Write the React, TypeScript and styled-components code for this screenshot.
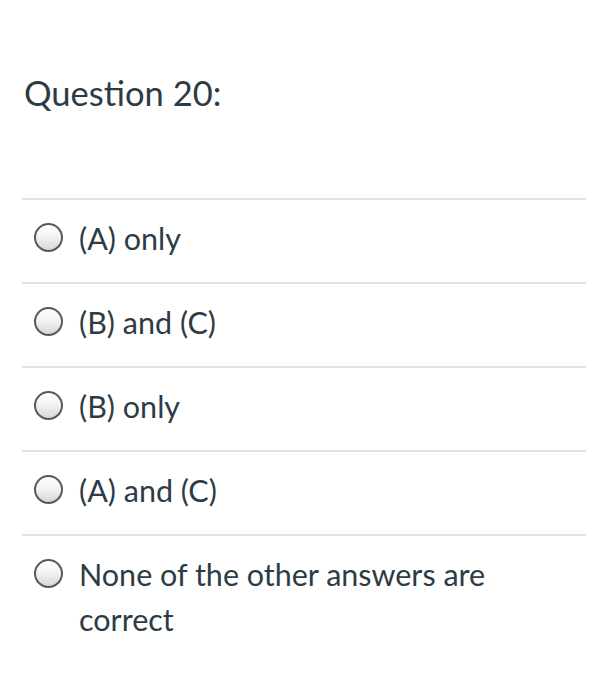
import React from "react";
import styled, { createGlobalStyle } from "styled-components";

const Global = createGlobalStyle`
  html, body { margin: 0; padding: 0; background: #ffffff; }
  body { font-family: Lato, "Open Sans", sans-serif; color: #2d3b45; }
`;

const Page = styled.div`
  padding: 69px 17px 0 22px;
`;

const Title = styled.h1`
  margin: 0 0 0 2px;
  font-size: 34.5px;
  font-weight: 400;
  line-height: 48px;
  color: #2d3b45;
`;

const List = styled.div`
  margin-top: 81px;
  border-top: 2px solid #e2e2e2;
`;

const Row = styled.label`
  display: flex;
  align-items: flex-start;
  gap: 16px;
  padding: 16px 0 21px 12px;
  border-bottom: 2px solid #e2e2e2;
  &:last-child { border-bottom: none; }
`;

const Radio = styled.span`
  flex: none;
  width: 29px;
  height: 29px;
  margin-top: 7px;
  box-sizing: border-box;
  border-radius: 50%;
  border: 2.5px solid #555a5e;
  background: linear-gradient(180deg, #ffffff 0%, #f3f3f3 45%, #d6d6d6 100%);
`;

const Text = styled.span`
  font-size: 30.5px;
  line-height: 45px;
  color: #2d3b45;
  max-width: 440px;
`;

const answers = ["(A) only", "(B) and (C)", "(B) only", "(A) and (C)", "None of the other answers are correct"];

export default function App() {
  return (
    <>
      <Global />
      <Page>
        <Title>Question 20:</Title>
        <List>
          {answers.map((a) => (
            <Row key={a}>
              <Radio />
              <Text>{a}</Text>
            </Row>
          ))}
        </List>
      </Page>
    </>
  );
}
